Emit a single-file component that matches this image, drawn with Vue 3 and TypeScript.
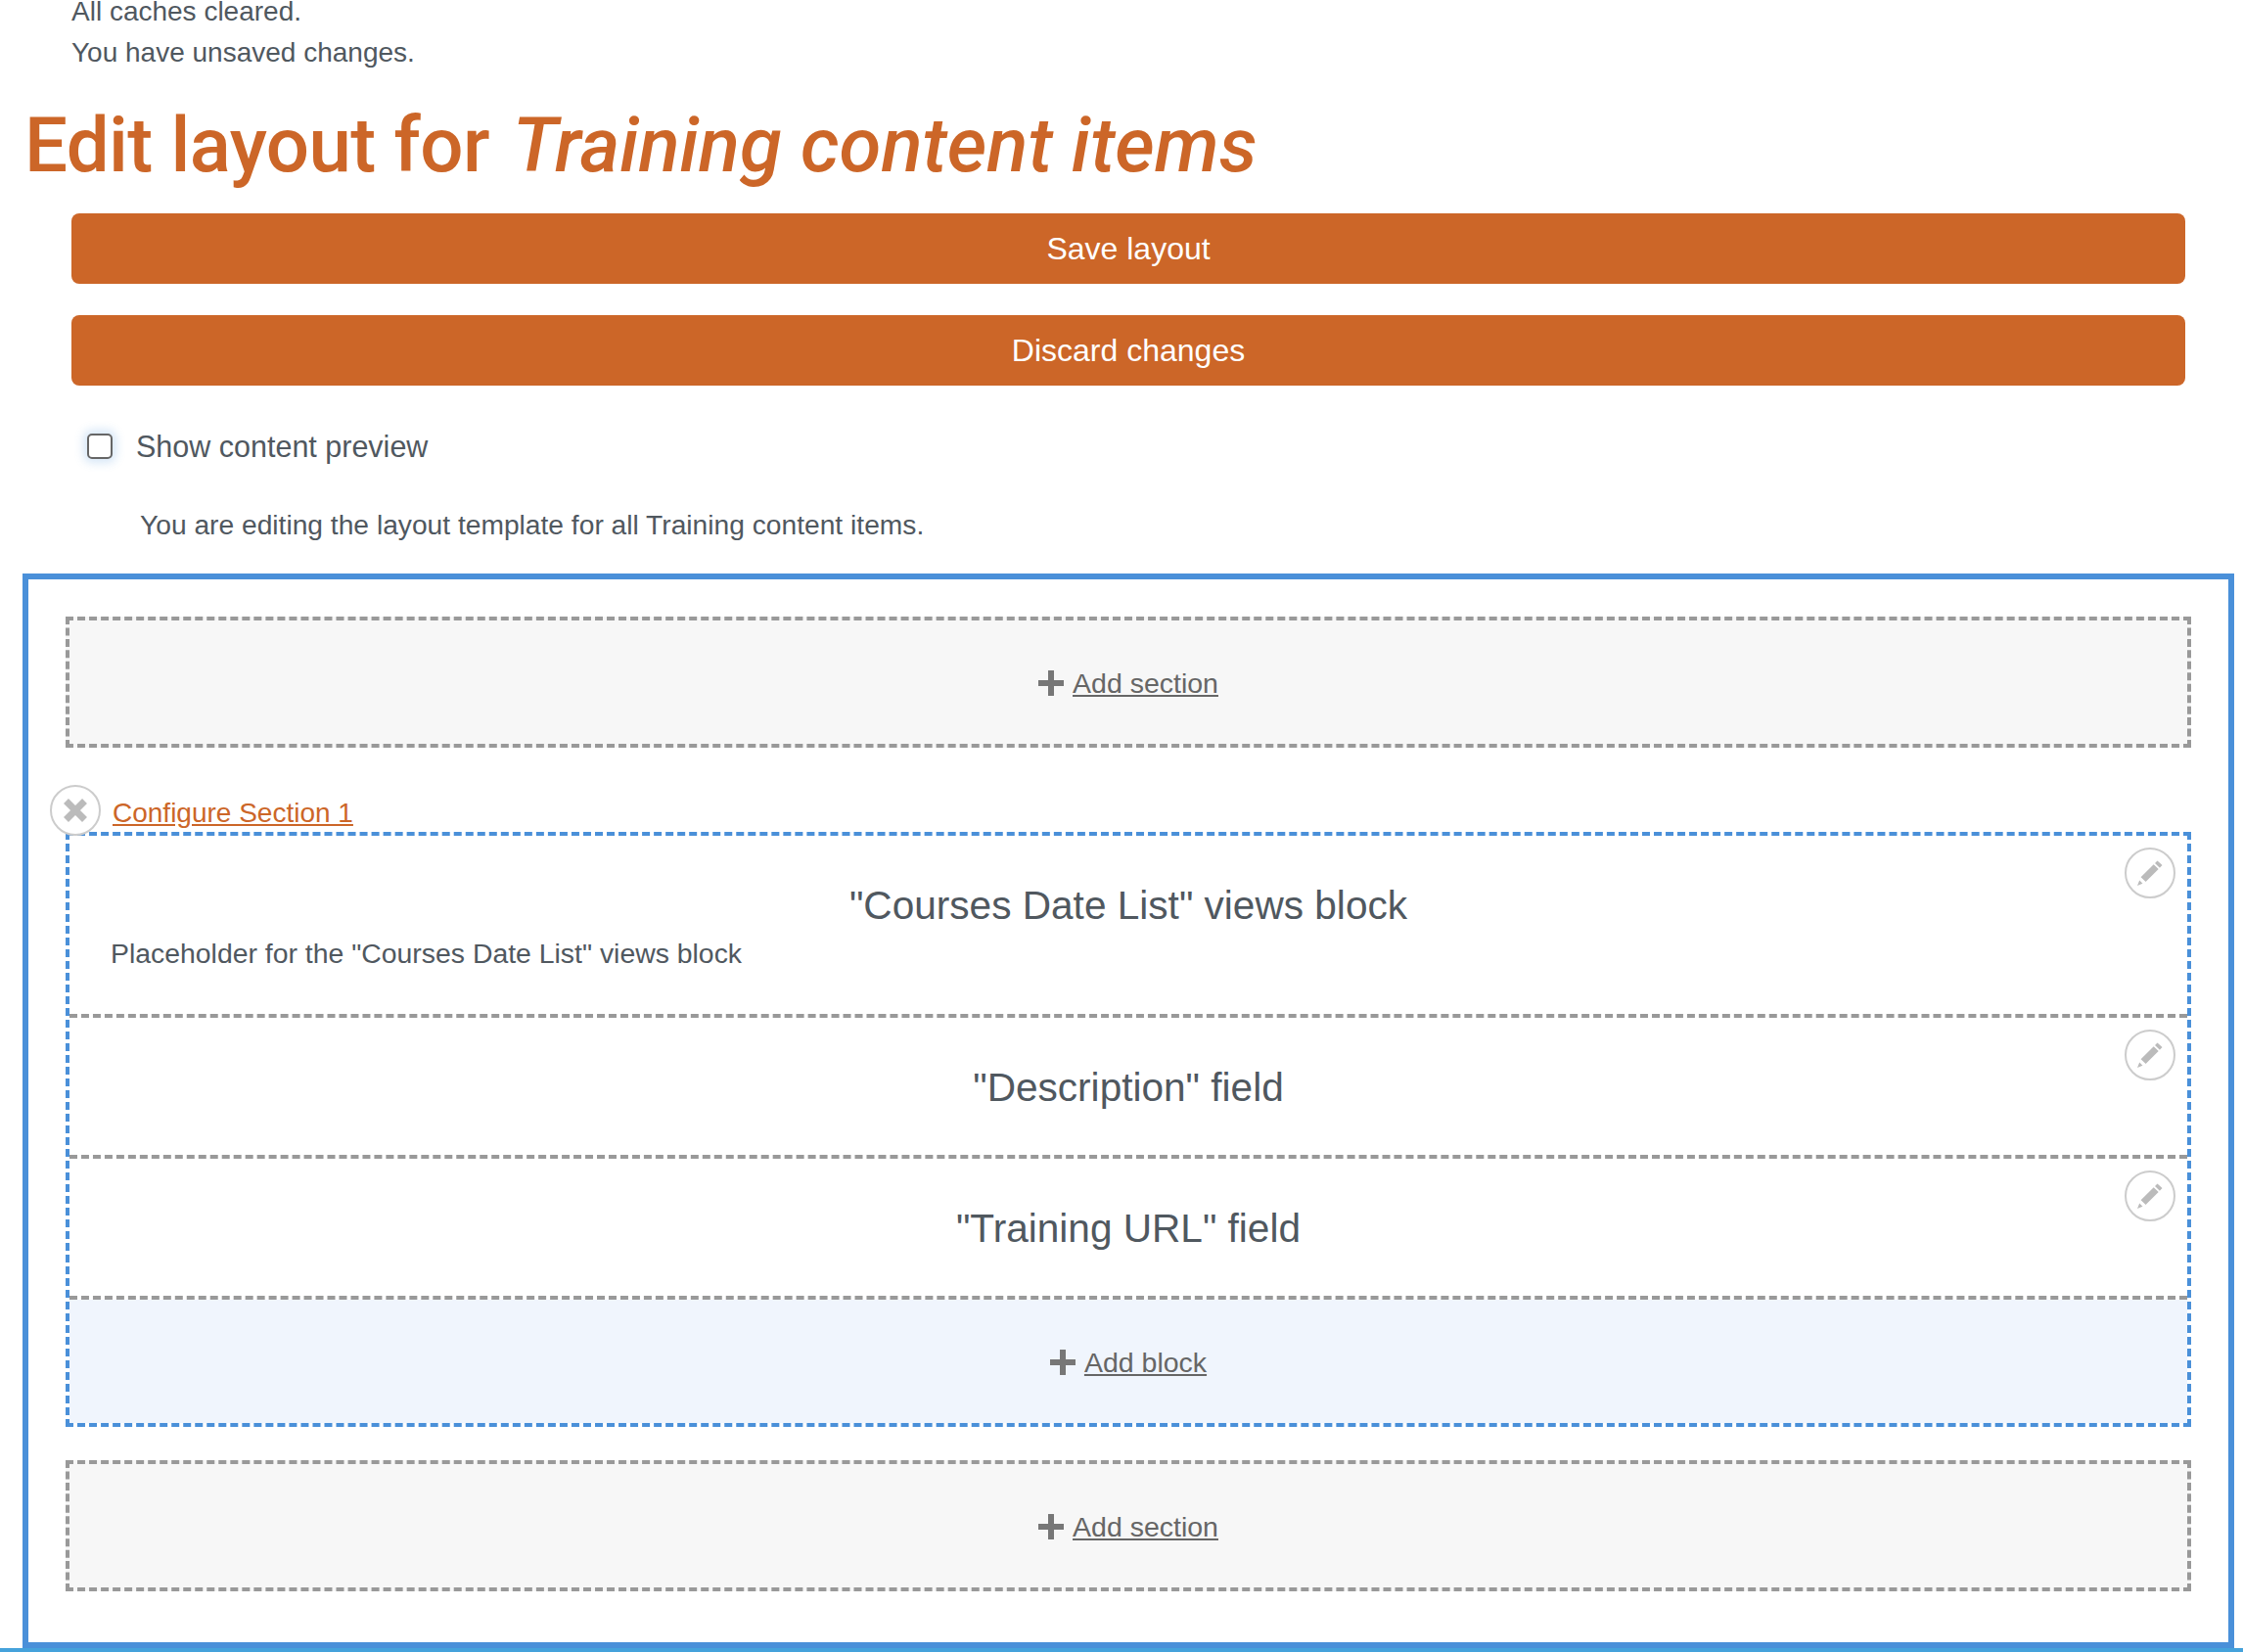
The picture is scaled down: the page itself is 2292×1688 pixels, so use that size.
<script setup lang="ts">
const blocks = [
  { title: '"Courses Date List" views block', body: 'Placeholder for the "Courses Date List" views block', cls: 'block-tall' },
  { title: '"Description" field', body: '', cls: '' },
  { title: '"Training URL" field', body: '', cls: '' },
]
</script>

<template>
  <div class="page">
    <div class="messages">
      <p>All caches cleared.</p>
      <p>You have unsaved changes.</p>
    </div>
    <h1 class="heading">Edit layout for <em>Training content items</em></h1>
    <div class="actions">
      <button class="btn" type="button">Save layout</button>
      <button class="btn" type="button">Discard changes</button>
    </div>
    <label class="preview"><span class="check"></span>Show content preview</label>
    <p class="hint">You are editing the layout template for all Training content items.</p>
    <div class="builder">
      <div class="add add-section">
        <a class="add-link"><svg class="plus" viewBox="0 0 26 26"><path d="M13 1v24M1 13h24" /></svg><span>Add section</span></a>
      </div>
      <div class="section-head">
        <span class="round close">
          <svg viewBox="0 0 24 24" width="24" height="24"><path d="M2.5 2.5l19 19M21.5 2.5l-19 19" /></svg>
        </span>
        <a class="configure">Configure Section 1</a>
      </div>
      <div class="section">
        <div v-for="b in blocks" :key="b.title" class="block" :class="b.cls">
          <span class="round pencil">
            <svg viewBox="0 0 28 28" width="28" height="28"><path d="M21.5 1.5l5 4.6-2.6 2.7-4.9-4.7zM17.7 5.3l5 4.8L9.6 23l-5-4.8zM3.2 21.5l3.3 3.2L1 27z" /></svg>
          </span>
          <h2>{{ b.title }}</h2>
          <p v-if="b.body">{{ b.body }}</p>
        </div>
        <div class="add add-block">
          <a class="add-link"><svg class="plus" viewBox="0 0 26 26"><path d="M13 1v24M1 13h24" /></svg><span>Add block</span></a>
        </div>
      </div>
      <div class="add add-section last">
        <a class="add-link"><svg class="plus" viewBox="0 0 26 26"><path d="M13 1v24M1 13h24" /></svg><span>Add section</span></a>
      </div>
    </div>
    <div class="footer-line"></div>
  </div>
</template>

<style>
html, body { margin: 0; background: #fff; overflow: hidden; }
</style>

<style scoped>
.page {
  height: 1688px;
  box-sizing: border-box;
  overflow: hidden;
  font-family: "Liberation Sans", Arial, sans-serif;
  font-size: 28px;
  color: #50585f;
}
.messages { margin: -9px 0 0 73px; line-height: 42px; }
.messages p { margin: 0; }
.heading {
  margin: 30px 0 0 25px;
  font-family: Roboto, sans-serif;
  font-weight: 500;
  font-size: 78px;
  letter-spacing: -0.6px;
  line-height: 88px;
  color: #cc6628;
}
.heading em { margin-left: 5px; letter-spacing: 0; }
.actions { margin: 25px 59px 0 73px; display: flex; flex-direction: column; gap: 32px; }
.btn {
  height: 72px;
  border: 0;
  border-radius: 8px;
  background: #cc6628;
  color: #fff;
  font: inherit;
  font-size: 32px;
  padding: 0;
}
.preview { display: flex; align-items: center; margin: 44px 0 0 89px; height: 36px; font-size: 30.5px; }
.check {
  width: 26px;
  height: 26px;
  box-sizing: border-box;
  border: 2px solid #666;
  border-radius: 5px;
  margin-right: 24px;
  background: #fff;
  box-shadow: 0 0 10px 4px rgba(74, 144, 217, 0.22);
}
.hint { margin: 44px 0 0 143px; line-height: 36px; font-size: 28.2px; }
.builder {
  margin: 32px 0 0 23px;
  width: 2260px;
  height: 1098px;
  box-sizing: border-box;
  border: 6px solid #4a90d9;
  padding: 38px;
  background: #fff;
}
.footer-line { height: 4px; background: #45a2db; }
.add {
  box-sizing: border-box;
  height: 134px;
  border: 4px dashed #999;
  background: #f7f7f7;
  display: flex;
  align-items: center;
  justify-content: center;
}
.add-link { display: inline-flex; align-items: center; gap: 9px; color: #666; font-size: 28.5px; padding-top: 2px; }
.add-link span { text-decoration: underline; }
.plus { width: 26px; height: 26px; }
.plus path { stroke: #777; stroke-width: 6; stroke-linecap: round; fill: none; }
.section-head {
  position: relative;
  height: 86px;
  box-sizing: border-box;
  padding: 51px 0 0 48px;
  line-height: 32px;
}
.configure { color: #cc6628; text-decoration: underline; }
.round {
  position: absolute;
  width: 52px;
  height: 52px;
  box-sizing: border-box;
  border: 2px solid #ccc;
  border-radius: 50%;
  background: #fff;
  display: flex;
  align-items: center;
  justify-content: center;
  z-index: 1;
}
.close { left: -16px; top: 38px; }
.close path { stroke: #bbb; stroke-width: 7; fill: none; }
.section {
  border: 4px dashed #4a90d9;
  height: 608px;
  box-sizing: border-box;
  display: flex;
  flex-direction: column;
}
.block {
  position: relative;
  height: 144px;
  box-sizing: border-box;
  border-bottom: 4px dashed #999;
  padding-top: 46px;
  text-align: center;
}
.block-tall { height: 186px; }
.block h2 { margin: 0; font-size: 40.6px; font-weight: 400; line-height: 50px; }
.block p { margin: 6px 0 0 42px; text-align: left; font-size: 28.4px; line-height: 36px; }
.pencil { right: 12px; top: 12px; }
.pencil path { fill: #bbb; }
.add-block { flex: 1; border: 0; background: #f0f5fd; }
.last { margin-top: 34px; }
</style>
